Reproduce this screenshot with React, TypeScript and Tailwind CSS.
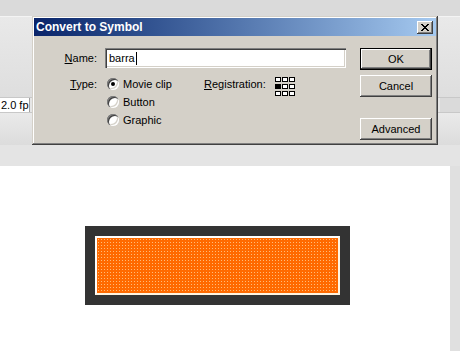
import React from "react";

const bevelOut =
  "shadow-[inset_-1px_-1px_#404040,inset_1px_1px_#ffffff,inset_-2px_-2px_#808080,inset_2px_2px_#d4d0c8]";

function Btn({ label, primary }: { label: string; primary?: boolean }) {
  return (
    <div
      className={`h-[22px] w-[72px] flex items-center justify-center bg-[#d4d0c8] text-black ${
        primary
          ? "shadow-[inset_0_0_0_1px_#000,inset_-2px_-2px_#404040,inset_2px_2px_#ffffff,inset_-3px_-3px_#808080]"
          : bevelOut
      }`}
    >
      {label}
    </div>
  );
}

function Radio({ label, checked }: { label: string; checked?: boolean }) {
  return (
    <div className="h-[18px] flex items-center gap-[4px]">
      <div className="w-[12px] h-[12px] rounded-full bg-white flex items-center justify-center shadow-[inset_1px_1px_#808080,inset_2px_2px_#404040,inset_-1px_-1px_#ffffff,inset_-2px_-2px_#d4d0c8]">
        {checked && <div className="w-[4px] h-[4px] rounded-full bg-black" />}
      </div>
      <span>{label}</span>
    </div>
  );
}

function RegGrid() {
  const cells = [0, 1, 2, 3, 4, 5, 6, 7, 8];
  return (
    <div className="grid grid-cols-3 gap-[2px] w-[20px]">
      {cells.map((i) => (
        <div
          key={i}
          className={`w-[6px] h-[5px] border border-black ${i === 3 ? "bg-black" : "bg-white"}`}
        />
      ))}
    </div>
  );
}

function Dialog() {
  return (
    <div className="absolute left-[32px] top-[16px] w-[406px] h-[129px] bg-[#d4d0c8] flex flex-col text-[11px] text-black shadow-[inset_-1px_-1px_#404040,inset_1px_1px_#d4d0c8,inset_-2px_-2px_#808080,inset_2px_2px_#ffffff]">
      <div className="mx-[2px] mt-[2px] h-[18px] bg-linear-to-r from-[#0a246a] to-[#a6caf0] flex items-center justify-between pl-[2px] pr-[3px]">
        <span className="text-white font-bold text-[12px] leading-none">Convert to Symbol</span>
        <div className={`w-[16px] h-[13px] bg-[#d4d0c8] flex items-center justify-center ${bevelOut}`}>
          <svg width="8" height="7" viewBox="0 0 8 7">
            <path d="M0 0 L7 7 M1 0 L8 7 M7 0 L0 7 M8 0 L1 7" stroke="#000" strokeWidth="1" />
          </svg>
        </div>
      </div>
      <div className="flex flex-1">
        <div className="flex-1 pt-[12px]">
          <div className="flex items-center h-[20px]">
            <div className="w-[65px] text-right">
              <span className="underline">N</span>ame:
            </div>
            <div className="ml-[8px] w-[241px] h-[20px] bg-white flex items-center pl-[4px] shadow-[inset_1px_1px_#808080,inset_2px_2px_#404040,inset_-1px_-1px_#ffffff,inset_-2px_-2px_#d4d0c8]">
              barra<span className="w-px h-[13px] bg-black ml-px" />
            </div>
          </div>
          <div className="flex mt-[7px]">
            <div className="w-[65px] text-right h-[18px] leading-[18px]">
              <span className="underline">T</span>ype:
            </div>
            <div className="ml-[10px] w-[97px] flex flex-col">
              <Radio label="Movie clip" checked />
              <Radio label="Button" />
              <Radio label="Graphic" />
            </div>
            <div className="flex items-start gap-[9px]">
              <span className="h-[18px] leading-[18px]">
                <span className="underline">R</span>egistration:
              </span>
              <div className="mt-[2px]">
                <RegGrid />
              </div>
            </div>
          </div>
        </div>
        <div className="w-[78px] pt-[12px] flex flex-col">
          <Btn label="OK" primary />
          <div className="mt-[5px]">
            <Btn label="Cancel" />
          </div>
          <div className="mt-[21px]">
            <Btn label="Advanced" />
          </div>
        </div>
      </div>
    </div>
  );
}

export default function App() {
  return (
    <div className="relative w-[460px] h-[351px] overflow-hidden font-['Liberation_Sans',Arial,sans-serif] bg-[#e2e2e2]">
      <div className="h-[17px] bg-[#dadada] border-b border-[#f4f4f4]" />
      <div className="h-[80px] bg-linear-to-b from-[#e9e9e9] to-[#dedede]" />
      <div className="h-[16px] flex border-y border-[#c8c8c8]">
        <div className="w-[30px] bg-white text-[11px] text-black leading-[14px] pl-[1px] border-r border-[#a0a0a0] overflow-hidden whitespace-nowrap">
          2.0 fp
        </div>
        <div className="flex-1 bg-[#e6e6e6]" />
        <div className="w-[20px] bg-[#ececec] bg-[radial-gradient(#c4c4c4_0.6px,transparent_0.8px)] bg-[length:2px_2px]" />
      </div>
      <div className="h-[32px] bg-linear-to-b from-[#eaeaea] to-[#dcdcdc]" />
      <div className="h-[21px] bg-[#e4e4e4]" />
      <div className="flex h-[185px]">
        <div className="flex-1 bg-white pt-[60px] pl-[85px]">
          <div className="w-[265px] h-[79px] bg-[#333333] p-[10px]">
            <div className="w-full h-full border-2 border-white border-r-[#fff4e0] border-b-[#fff4e0] bg-[#ff6a00] bg-[radial-gradient(#ffbb77_0.75px,transparent_0.95px)] bg-[length:3px_3px]" />
          </div>
        </div>
        <div className="w-[10px] bg-[#e0e0e0]" />
      </div>
      <Dialog />
    </div>
  );
}
